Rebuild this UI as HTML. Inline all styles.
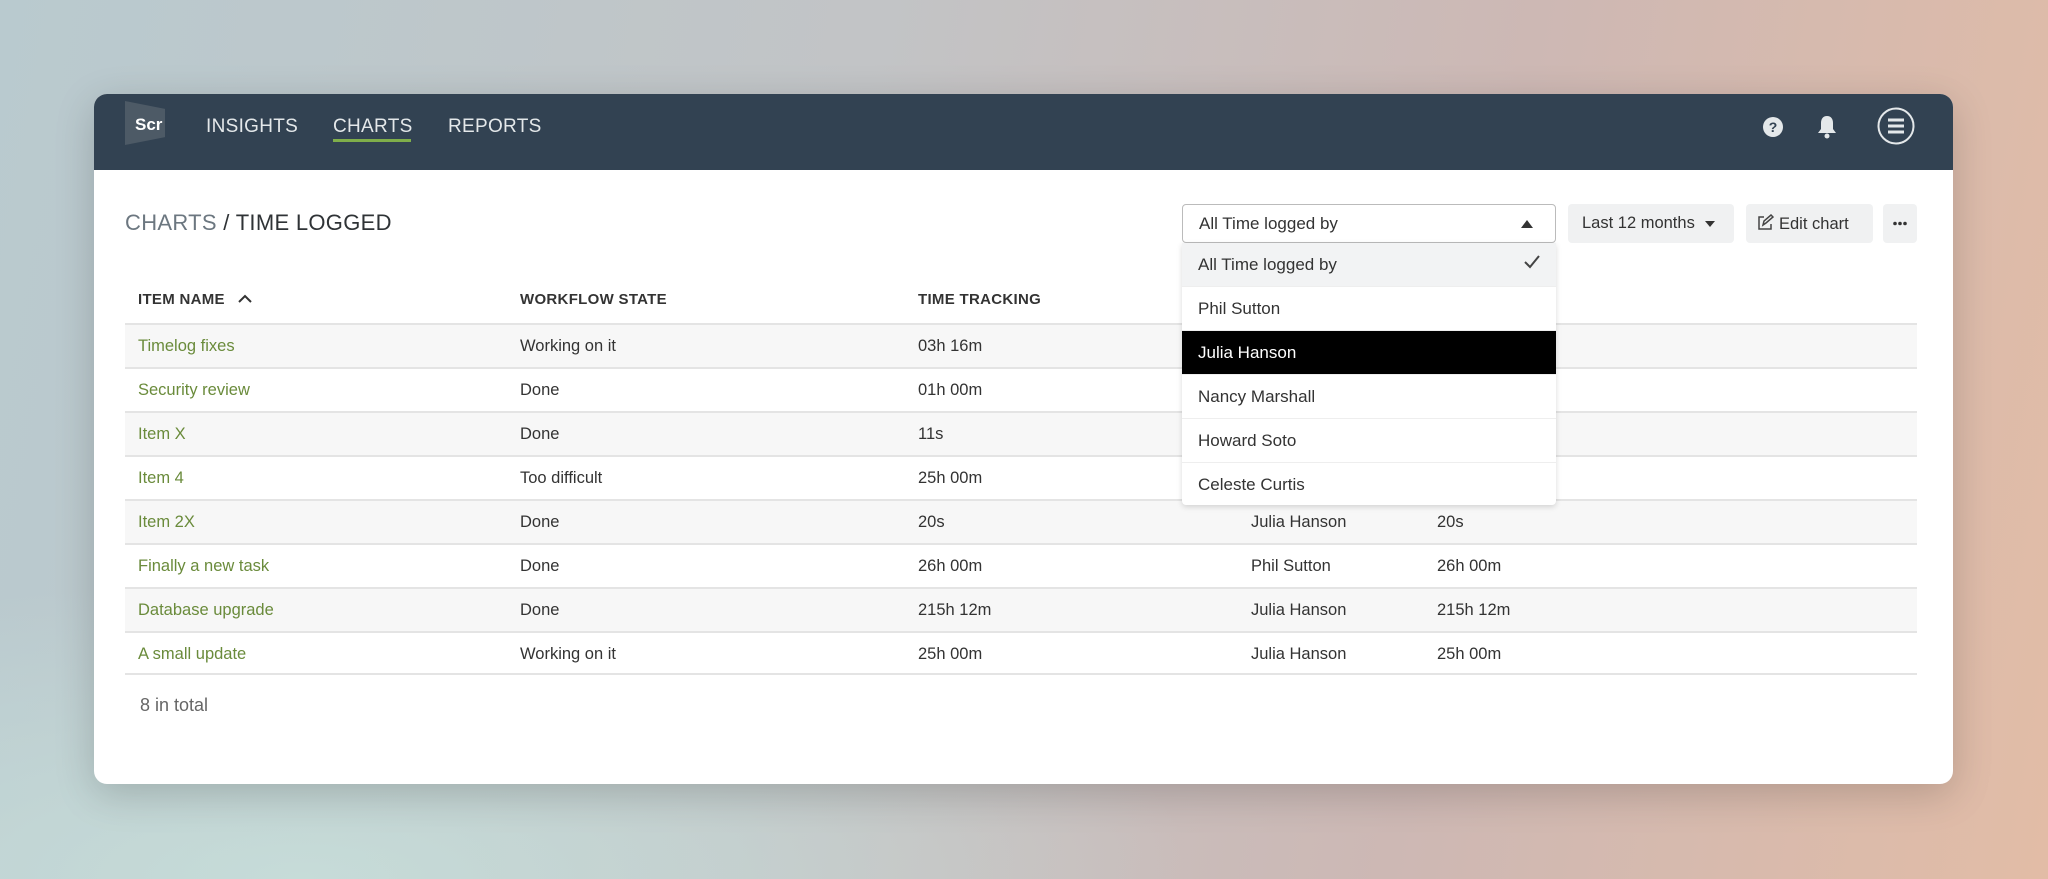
<!DOCTYPE html>
<html><head><meta charset="utf-8"><style>
*{box-sizing:border-box;margin:0;padding:0}
html,body{width:2048px;height:879px;overflow:hidden}
body{font-family:"Liberation Sans",sans-serif;background:linear-gradient(100deg,#b9cacf 0%,#c2c4c6 40%,#cdb8b4 70%,#e2bca6 100%);position:relative}
.bg2{position:absolute;inset:0;background:radial-gradient(ellipse 900px 300px at 300px 879px,rgba(200,225,220,.8),transparent)}
.card{position:absolute;left:94px;top:94px;width:1859px;height:690px;background:#fff;border-radius:13px;overflow:hidden;box-shadow:0 10px 40px rgba(0,0,0,.18)}
.nav{height:76px;background:#324252;position:relative;color:#e4e8ea}
.logo{position:absolute;left:31px;top:7px;width:40px;height:44px;background:#4d5a66;clip-path:polygon(0 0,100% 18%,100% 82%,0 100%);color:#fff;font-weight:bold;font-size:17px;padding:14px 0 0 10px}
.nav a{position:absolute;top:22px;font-size:19px;letter-spacing:.3px}
.ul{position:absolute;left:239px;top:45px;width:78px;height:3px;background:#7fae4a}
.title{position:absolute;left:31px;top:116px;font-size:22px;color:#2f3336;letter-spacing:.3px}
.title span{color:#6c7780}
.th{position:absolute;top:197px;font-size:15px;font-weight:bold;color:#333;letter-spacing:.3px}
.row{position:absolute;left:31px;width:1792px;height:44px;border-top:2px solid #e4e4e4}
.row.g{background:#f7f7f7}
.c{position:absolute;top:12px;font-size:16.5px;color:#333}
.c.n{color:#6a8b3b}
.dd{position:absolute;left:1088px;top:110px;width:374px;height:39px;border:1px solid #bbb;border-radius:4px;font-size:17px;color:#333;padding:9px 16px;background:#fff}
.list{position:absolute;left:1088px;top:149px;width:374px;height:262px;background:#fff;box-shadow:0 2px 6px rgba(0,0,0,.15);border-radius:0 0 4px 4px}
.opt{height:44px;padding:12px 16px;font-size:17px;color:#333;border-bottom:1px solid #eee}
.btn{position:absolute;top:110px;height:39px;background:#f0f1f2;border-radius:4px;font-size:16.5px;color:#333;padding:10px 14px}
</style></head><body><div class="bg2"></div>
<div class="card">
<div class="nav">
<div class="logo">Scr</div>
<a style="left:112px">INSIGHTS</a><a style="left:239px">CHARTS</a><a style="left:354px">REPORTS</a>
<div class="ul"></div>
<svg style="position:absolute;left:1668px;top:22px" width="22" height="22" viewBox="0 0 22 22"><circle cx="11" cy="11" r="10" fill="#e4e8ea"/><text x="11" y="16" font-size="14" font-weight="bold" text-anchor="middle" fill="#324252" font-family="Liberation Sans">?</text></svg>
<svg style="position:absolute;left:1722px;top:20px" width="22" height="26" viewBox="0 0 22 26"><path d="M11 2c-4 0-6 3-6 7v6l-3 4h18l-3-4V9c0-4-2-7-6-7z" fill="#e4e8ea"/><circle cx="11" cy="22" r="2.5" fill="#e4e8ea"/></svg>
<svg style="position:absolute;left:1783px;top:13px" width="38" height="38" viewBox="0 0 38 38"><circle cx="19" cy="19" r="17.5" fill="none" stroke="#e4e8ea" stroke-width="2"/><path d="M11 13h16M11 19h16M11 25h16" stroke="#e4e8ea" stroke-width="3"/></svg>
</div>
<div class="title"><span>CHARTS</span> / TIME LOGGED</div>
<div class="th" style="left:44px">ITEM NAME <svg width="16" height="12" viewBox="0 0 16 12" style="margin-left:8px"><path d="M2 10l6-6 6 6" fill="none" stroke="#333" stroke-width="2"/></svg></div>
<div class="th" style="left:426px">WORKFLOW STATE</div>
<div class="th" style="left:824px">TIME TRACKING</div>

<div class="row g" style="top:229px"><div class="c n" style="left:13px">Timelog fixes</div><div class="c" style="left:395px">Working on it</div><div class="c" style="left:793px">03h 16m</div></div>
<div class="row" style="top:273px"><div class="c n" style="left:13px">Security review</div><div class="c" style="left:395px">Done</div><div class="c" style="left:793px">01h 00m</div></div>
<div class="row g" style="top:317px"><div class="c n" style="left:13px">Item X</div><div class="c" style="left:395px">Done</div><div class="c" style="left:793px">11s</div></div>
<div class="row" style="top:361px"><div class="c n" style="left:13px">Item 4</div><div class="c" style="left:395px">Too difficult</div><div class="c" style="left:793px">25h 00m</div></div>
<div class="row g" style="top:405px"><div class="c n" style="left:13px">Item 2X</div><div class="c" style="left:395px">Done</div><div class="c" style="left:793px">20s</div><div class="c" style="left:1126px">Julia Hanson</div><div class="c" style="left:1312px">20s</div></div>
<div class="row" style="top:449px"><div class="c n" style="left:13px">Finally a new task</div><div class="c" style="left:395px">Done</div><div class="c" style="left:793px">26h 00m</div><div class="c" style="left:1126px">Phil Sutton</div><div class="c" style="left:1312px">26h 00m</div></div>
<div class="row g" style="top:493px"><div class="c n" style="left:13px">Database upgrade</div><div class="c" style="left:395px">Done</div><div class="c" style="left:793px">215h 12m</div><div class="c" style="left:1126px">Julia Hanson</div><div class="c" style="left:1312px">215h 12m</div></div>
<div class="row" style="top:537px;border-bottom:2px solid #e4e4e4"><div class="c n" style="left:13px">A small update</div><div class="c" style="left:395px">Working on it</div><div class="c" style="left:793px">25h 00m</div><div class="c" style="left:1126px">Julia Hanson</div><div class="c" style="left:1312px">25h 00m</div></div>
<div style="position:absolute;left:46px;top:601px;font-size:18px;color:#666">8 in total</div>

<div class="dd">All Time logged by<svg style="position:absolute;right:22px;top:15px" width="12" height="8" viewBox="0 0 12 8"><path d="M0 8L6 0l6 8z" fill="#333"/></svg></div>
<div class="list">
<div class="opt" style="background:#f2f3f4;position:relative">All Time logged by<svg style="position:absolute;right:16px;top:12px" width="16" height="14" viewBox="0 0 16 14"><path d="M1 7l5 5L15 1" fill="none" stroke="#444" stroke-width="2"/></svg></div>
<div class="opt">Phil Sutton</div>
<div class="opt" style="background:#000;color:#fff">Julia Hanson</div>
<div class="opt">Nancy Marshall</div>
<div class="opt">Howard Soto</div>
<div class="opt" style="border:none">Celeste Curtis</div>
</div>
<div class="btn" style="left:1474px;width:166px">Last 12 months <svg width="10" height="6" viewBox="0 0 10 6" style="margin-left:6px;vertical-align:middle"><path d="M0 0h10L5 6z" fill="#333"/></svg></div>
<div class="btn" style="left:1652px;width:127px;padding-left:10px"><svg width="18" height="18" viewBox="0 0 18 18" style="vertical-align:-3px;margin-right:5px"><path d="M8 3H3v12h12v-5M7 11l1-4 7-6 2 2-7 6z" fill="none" stroke="#444" stroke-width="1.5"/></svg>Edit chart</div>
<div class="btn" style="left:1789px;width:34px;padding:0"><svg width="34" height="39" viewBox="0 0 34 39"><circle cx="12" cy="19.5" r="1.8" fill="#333"/><circle cx="17" cy="19.5" r="1.8" fill="#333"/><circle cx="22" cy="19.5" r="1.8" fill="#333"/></svg></div>
</div>
</body></html>
